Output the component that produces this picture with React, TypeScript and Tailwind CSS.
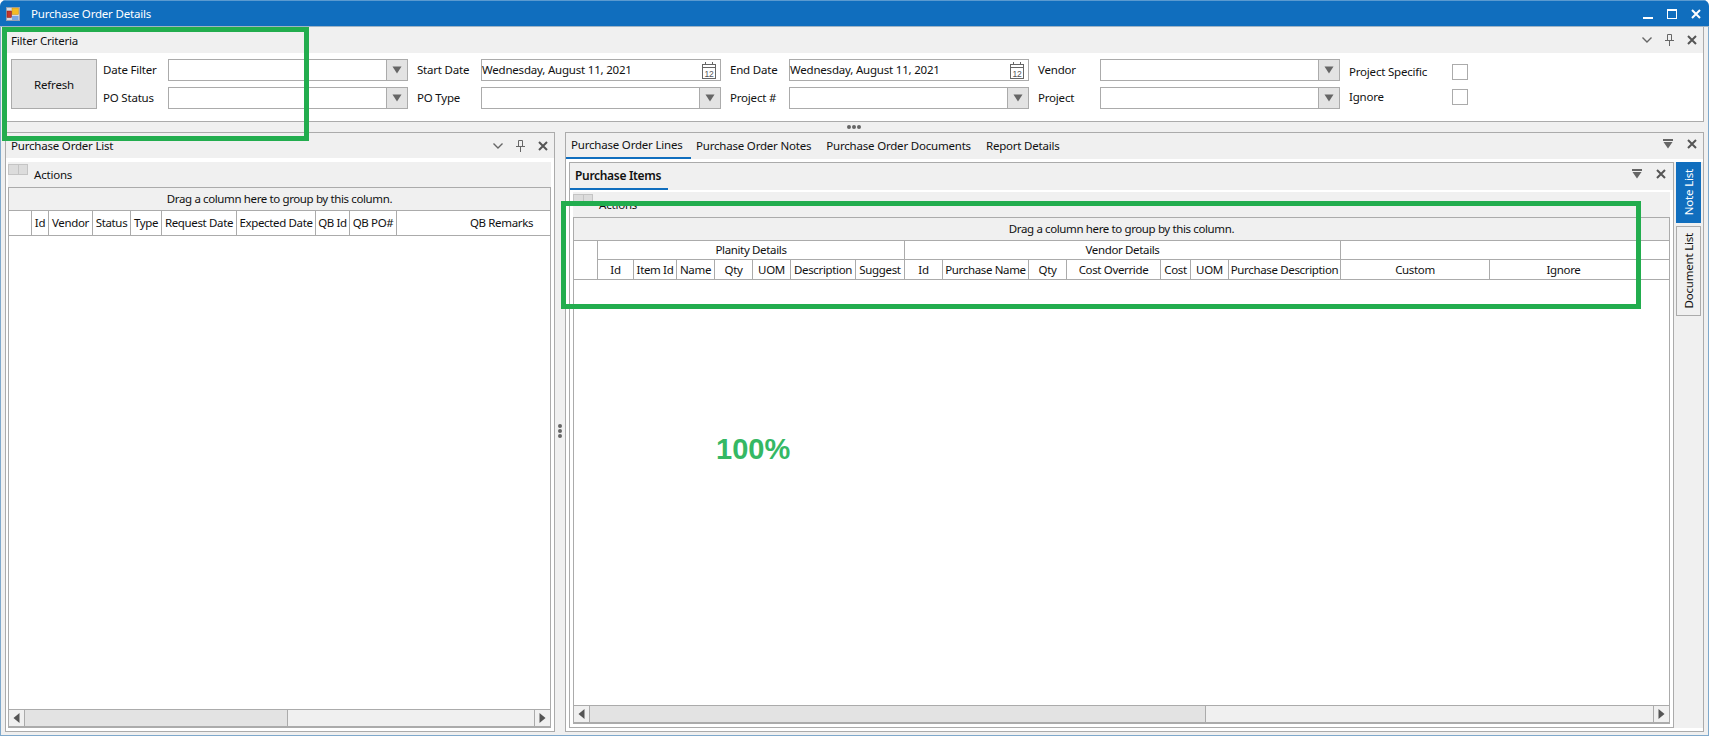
const LINE = "border-[#ababab]";

function Tri({ className = "" }: { className?: string }) {
  return (
    <svg width="10" height="8" viewBox="0 0 10 8" className={className}>
      <path d="M0.5 0.5h9L5 7.5z" fill="#666" />
    </svg>
  );
}

function MenuTri() {
  return (
    <svg width="10" height="10" viewBox="0 0 10 10">
      <rect x="0" y="0" width="10" height="2" fill="#666" />
      <path d="M0.5 3h9L5 9.5z" fill="#666" />
    </svg>
  );
}

function CloseX({ color = "#555", size = 10 }: { color?: string; size?: number }) {
  return (
    <svg width={size} height={size} viewBox="0 0 10 10">
      <path d="M1 1l8 8M9 1l-8 8" stroke={color} strokeWidth="2" fill="none" />
    </svg>
  );
}

function Chevron() {
  return (
    <svg width="10" height="6" viewBox="0 0 10 6">
      <path d="M0.5 0.5L5 5l4.5-4.5" stroke="#666" strokeWidth="1.4" fill="none" />
    </svg>
  );
}

function Pin() {
  return (
    <svg width="9" height="12" viewBox="0 0 9 12">
      <path d="M2.5 0.5h4v6h-4zM0 6.5h9M4.5 7v5" stroke="#666" strokeWidth="1" fill="none" />
    </svg>
  );
}

function CalendarIcon() {
  return (
    <svg width="14" height="17" viewBox="0 0 14 17" className="shrink-0">
      <rect x="0.5" y="2.5" width="13" height="14" fill="#fff" stroke="#666" />
      <path d="M0.5 5.5h13" stroke="#666" />
      <path d="M3.5 0v3M10.5 0v3" stroke="#666" />
      <text x="7" y="14.5" textAnchor="middle" fontSize="8.5" fill="#555" fontFamily="Liberation Sans">12</text>
    </svg>
  );
}

function WindowIcon() {
  return (
    <svg width="14" height="14" viewBox="0 0 14 14" className="shrink-0">
      <rect x="0.5" y="0.5" width="13" height="13" fill="#d5dbe4" stroke="#97a2b2" />
      <rect x="6" y="1" width="6.5" height="6.5" fill="#f4bb25" stroke="#c9921a" strokeWidth="0.5" />
      <rect x="1" y="4" width="4.5" height="6.5" fill="#c5352a" stroke="#7e1d14" strokeWidth="0.5" />
      <rect x="6" y="9" width="6.5" height="4" fill="#7aa6e2" />
    </svg>
  );
}

function Combo() {
  return (
    <div className={`flex h-[22px] border ${LINE} bg-white`}>
      <div className="flex-1" />
      <div className={`flex w-[21px] items-center justify-center border-l ${LINE} bg-[#e3e3e3]`}>
        <Tri />
      </div>
    </div>
  );
}

function DatePicker() {
  return (
    <div className={`flex h-[22px] items-center justify-between border ${LINE} bg-white pr-[4px]`}>
      <span className="whitespace-nowrap leading-none">Wednesday, August 11, 2021</span>
      <CalendarIcon />
    </div>
  );
}

function Label({ children, className = "pl-[9px]" }: { children: string; className?: string }) {
  return <div className={`flex items-center whitespace-nowrap ${className}`}>{children}</div>;
}

function Checkbox({ className }: { className: string }) {
  return <div className={`h-[16px] w-[16px] border ${LINE} bg-white ${className}`} />;
}

function FilterPanel() {
  return (
    <div className={`ml-[1px] mr-[4px] h-[95px] shrink-0 border-r border-b ${LINE} bg-white`}>
      <div className="flex h-[26px] items-center justify-between bg-[#f0f0f0] pl-[9px] pr-[6px]">
        <span className="pt-[1px]">Filter Criteria</span>
        <div className="flex items-center gap-[13px]">
          <Chevron />
          <Pin />
          <CloseX />
        </div>
      </div>
      <div className="flex pl-[9px] pt-[6px]">
        <button className={`h-[50px] w-[86px] border pt-[1px] ${LINE} bg-[#e3e3e3]`}>Refresh</button>
        <div className="grid grid-cols-[71px_240px_73px_240px_68px_240px_71px_240px_112px_16px] grid-rows-[22px_22px] gap-y-[6px]">
          <Label className="pl-[6px]">Date Filter</Label>
          <Combo />
          <Label>Start Date</Label>
          <DatePicker />
          <Label>End Date</Label>
          <DatePicker />
          <Label>Vendor</Label>
          <Combo />
          <Label className="mt-[5px] h-[16px] pl-[9px]">Project Specific</Label>
          <Checkbox className="mt-[5px]" />
          <Label className="pl-[6px]">PO Status</Label>
          <Combo />
          <Label>PO Type</Label>
          <Combo />
          <Label>Project #</Label>
          <Combo />
          <Label>Project</Label>
          <Combo />
          <Label className="mt-[2px] h-[16px] pl-[9px]">Ignore</Label>
          <Checkbox className="mt-[2px]" />
        </div>
      </div>
    </div>
  );
}

function ToolbarGlyph() {
  return (
    <div className="mt-[2px] flex h-[11px] w-[20px]">
      <div className="flex-1 border border-[#c4c4c4] bg-[#dcdcdc]" />
      <div className="-ml-px flex-1 border border-[#c4c4c4] bg-[#dcdcdc]" />
    </div>
  );
}

function Cell({ w, children }: { w: number; children?: string }) {
  return (
    <div
      style={{ width: w }}
      className={`flex shrink-0 items-center justify-center overflow-visible whitespace-nowrap border-r tracking-[-0.35px] ${LINE}`}
    >
      {children}
    </div>
  );
}

function ArrowButton({ dir }: { dir: "left" | "right" }) {
  return (
    <div className={`flex h-full w-[16px] shrink-0 items-center justify-center ${dir === "left" ? "border-r" : "border-l"} ${LINE}`}>
      <svg width="7" height="10" viewBox="0 0 7 10">
        <path d={dir === "left" ? "M6.5 0v10L0.5 5z" : "M0.5 0v10l6-5z"} fill="#555" />
      </svg>
    </div>
  );
}

function ScrollBar({ thumb }: { thumb: number }) {
  return (
    <div className={`flex h-[17px] shrink-0 border-t ${LINE} bg-[#f0f0f0]`}>
      <ArrowButton dir="left" />
      <div style={{ width: thumb }} className={`shrink-0 border-r ${LINE} bg-[#e3e3e3]`} />
      <div className="flex-1" />
      <ArrowButton dir="right" />
    </div>
  );
}

function GroupRow({ h }: { h: string }) {
  return (
    <div className={`flex ${h} shrink-0 items-center justify-center border-b tracking-[-0.38px] ${LINE} bg-[#f0f0f0]`}>
      Drag a column here to group by this column.
    </div>
  );
}

const LEFT_COLS: [number, string][] = [
  [23, ""],
  [17, "Id"],
  [44, "Vendor"],
  [38, "Status"],
  [31, "Type"],
  [75, "Request Date"],
  [79, "Expected Date"],
  [34, "QB Id"],
  [47, "QB PO#"],
  [210, "QB Remarks"],
];

function OrderList() {
  return (
    <div className={`flex h-[600px] w-[550px] shrink-0 flex-col border ${LINE} bg-white`}>
      <div className="flex h-[25px] shrink-0 items-center justify-between bg-[#f0f0f0] pl-[5px] pr-[6px]">
        <span className="pt-[1px]">Purchase Order List</span>
        <div className="flex items-center gap-[13px]">
          <Chevron />
          <Pin />
          <CloseX />
        </div>
      </div>
      <div className="flex min-h-0 flex-1 flex-col pb-[3px] pl-[2px] pr-[3px] pt-[4px]">
        <div className="flex h-[25px] shrink-0 gap-[6px] bg-[#f0f0f0]">
          <ToolbarGlyph />
          <span className="mt-[4px]">Actions</span>
        </div>
        <div className={`flex min-h-0 flex-1 flex-col overflow-hidden border-x border-t border-b-2 ${LINE}`}>
          <GroupRow h="h-[23px]" />
          <div className={`flex h-[25px] shrink-0 border-b ${LINE}`}>
            {LEFT_COLS.map(([w, t], i) => (
              <Cell key={i} w={w}>
                {t}
              </Cell>
            ))}
          </div>
          <div className="flex-1" />
          <ScrollBar thumb={263} />
        </div>
      </div>
    </div>
  );
}

const ITEM_COLS: [number, string][] = [
  [36, "Id"],
  [43, "Item Id"],
  [38, "Name"],
  [38, "Qty"],
  [38, "UOM"],
  [65, "Description"],
  [49, "Suggest"],
  [38, "Id"],
  [86, "Purchase Name"],
  [38, "Qty"],
  [94, "Cost Override"],
  [30, "Cost"],
  [38, "UOM"],
  [112, "Purchase Description"],
  [149, "Custom"],
  [148, "Ignore"],
];

function PurchaseItems() {
  return (
    <div className={`flex w-[1105px] shrink-0 flex-col border ${LINE} bg-white`}>
      <div className="flex h-[27px] shrink-0 items-start justify-between bg-[#f0f0f0] pr-[7px]">
        <div className="flex h-[27px] w-[98px] items-center border-b-2 border-[#106ebe] pl-[5px] pt-[1px] text-[12px] font-semibold tracking-[-0.32px]">
          Purchase Items
        </div>
        <div className="mt-[6px] flex items-center gap-[14px]">
          <MenuTri />
          <CloseX />
        </div>
      </div>
      <div className="flex min-h-0 flex-1 flex-col px-[3px] pb-[3px] pt-[2px]">
        <div className="flex h-[25px] shrink-0 gap-[6px] bg-[#f0f0f0]">
          <ToolbarGlyph />
          <span className="mt-[4px]">Actions</span>
        </div>
        <div className={`flex min-h-0 flex-1 flex-col overflow-hidden border-x border-t border-b-2 ${LINE}`}>
          <GroupRow h="h-[23px]" />
          <div className="flex h-[39px] shrink-0">
            <div className={`w-[24px] shrink-0 border-r border-b ${LINE}`} />
            <div className="flex min-w-0 flex-1 flex-col">
              <div className={`flex h-[19px] shrink-0 border-b ${LINE}`}>
                <Cell w={307}>Planity Details</Cell>
                <Cell w={436}>Vendor Details</Cell>
              </div>
              <div className={`flex h-[20px] shrink-0 border-b ${LINE}`}>
                {ITEM_COLS.map(([w, t], i) => (
                  <Cell key={i} w={w}>
                    {t}
                  </Cell>
                ))}
              </div>
            </div>
          </div>
          <div className="flex-1" />
          <ScrollBar thumb={616} />
        </div>
      </div>
    </div>
  );
}

function SideTabs() {
  return (
    <div className="flex flex-1 flex-col gap-[3px] bg-[#f0f0f0] pl-[2px] pr-[2px]">
      <div className="flex h-[61px] w-[25px] items-center justify-center bg-[#106ebe] text-white">
        <span className="rotate-180 whitespace-nowrap [writing-mode:vertical-rl]">Note List</span>
      </div>
      <div className={`flex h-[90px] w-[25px] items-center justify-center border ${LINE}`}>
        <span className="rotate-180 whitespace-nowrap [writing-mode:vertical-rl]">Document List</span>
      </div>
    </div>
  );
}

function LinesPanel() {
  return (
    <div className={`flex h-[600px] w-[1139px] shrink-0 flex-col border ${LINE} bg-white`}>
      <div className="flex h-[26px] shrink-0 items-start justify-between bg-[#f0f0f0] pr-[6px]">
        <div className="flex h-[26px] items-center whitespace-nowrap">
          <div className="flex h-[26px] w-[125px] items-center border-b-2 border-[#106ebe] pl-[5px]">
            Purchase Order Lines
          </div>
          <span className="ml-[5px]">Purchase Order Notes</span>
          <span className="ml-[15px]">Purchase Order Documents</span>
          <span className="ml-[15px]">Report Details</span>
        </div>
        <div className="mt-[6px] flex items-center gap-[14px]">
          <MenuTri />
          <CloseX />
        </div>
      </div>
      <div className="flex min-h-0 flex-1 pb-[3px] pl-[3px] pr-[1px] pt-[3px]">
        <PurchaseItems />
        <SideTabs />
      </div>
    </div>
  );
}

export default function App() {
  return (
    <div className="relative flex h-[736px] w-[1709px] flex-col overflow-hidden rounded-t-[6px] bg-[#f0f0f0] text-[11.5px] tracking-[-0.2px] text-[#111] [font-family:'Noto_Sans',sans-serif]">
      <div className="flex h-[27px] shrink-0 items-center justify-between border-b border-[#9fb4c6] border-t border-t-[#5a9ad0] bg-[#106ebe] pl-[6px] pr-[8px] text-white">
        <div className="flex items-center gap-[11px]">
          <WindowIcon />
          <span>Purchase Order Details</span>
        </div>
        <div className="flex items-center gap-[14px]">
          <div className="mt-[8px] h-[2px] w-[10px] bg-white" />
          <div className="h-[10px] w-[10px] border border-t-2 border-white" />
          <CloseX color="#fff" />
        </div>
      </div>
      <div className="flex min-h-0 flex-1 flex-col border-x border-b border-x-[#7fa9cc] border-b-[#7fa9cc]">
        <FilterPanel />
        <div className="flex h-[10px] shrink-0 items-center justify-center gap-[1px] pr-[2px]">
          <i className="h-[4px] w-[4px] rounded-full bg-[#666]" />
          <i className="h-[4px] w-[4px] rounded-full bg-[#666]" />
          <i className="h-[4px] w-[4px] rounded-full bg-[#666]" />
        </div>
        <div className="flex pl-[4px]">
          <OrderList />
          <div className="flex w-[10px] shrink-0 flex-col items-center gap-[1px] pt-[292px]">
            <i className="h-[4px] w-[4px] rounded-full bg-[#666]" />
            <i className="h-[4px] w-[4px] rounded-full bg-[#666]" />
            <i className="h-[4px] w-[4px] rounded-full bg-[#666]" />
          </div>
          <LinesPanel />
        </div>
      </div>

      {/* green review annotations drawn over the window */}
      <div className="absolute left-[2px] top-[27px] h-[114px] w-[307px] border-[5px] border-[#22ad4e]" />
      <div className="absolute left-[561px] top-[201px] h-[108px] w-[1080px] border-[5px] border-[#22ad4e]" />
      <div className="absolute left-[716px] top-[431px] text-[29px] font-bold leading-[36px] tracking-normal text-[#35b864] [font-family:'Liberation_Sans',sans-serif]">
        100%
      </div>
    </div>
  );
}
